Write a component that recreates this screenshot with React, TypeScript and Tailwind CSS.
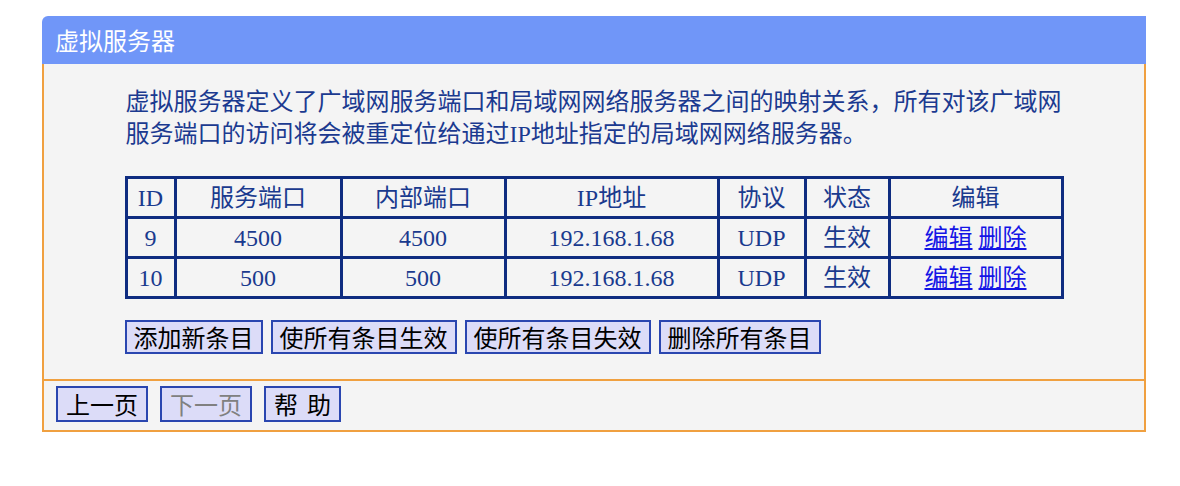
import React from "react";

const rows = [
  { id: "9", ext: "4500", inner: "4500", ip: "192.168.1.68", proto: "UDP", state: "生效" },
  { id: "10", ext: "500", inner: "500", ip: "192.168.1.68", proto: "UDP", state: "生效" },
];

const serif = "font-['Liberation_Serif','Noto_Sans_CJK_SC',serif]";
const sans = "font-['Noto_Sans_CJK_SC','Noto_Sans',sans-serif]";

function Btn({ children, muted, tall }: { children: React.ReactNode; muted?: boolean; tall?: boolean }) {
  return (
    <button
      className={`${tall ? "h-[36px] px-[8px]" : "h-[34px] px-[7px]"} border-2 border-[#2a46b0] bg-[#dcdcf8] text-[24px] leading-[30px] ${
        muted ? "text-[#808080]" : "text-black"
      }`}
    >
      {children}
    </button>
  );
}

export default function App() {
  const cell = "border-[3px] border-[#0e2c80] h-[40px] p-0 text-center align-middle";

  return (
    <div className={`bg-white min-h-screen pt-[16px] ${sans}`}>
      <div className="ml-[42px] w-[1104px]">
        <div className="h-[48px] bg-[#7096f8] rounded-tl-[6px] pl-[13px] flex items-center text-white text-[24px]">
          虚拟服务器
        </div>

        <div className="bg-[#f4f4f4] border-x-2 border-[#f0a040]">
          <div className="pt-[22px] pb-[25px] flex flex-col items-center">
            <div className="w-[939px]">
              <p className={`text-[24px] leading-[32px] text-[#1b3a90] pl-[1px] ${serif}`}>
                虚拟服务器定义了广域网服务端口和局域网网络服务器之间的映射关系，所有对该广域网服务端口的访问将会被重定位给通过IP地址指定的局域网网络服务器。
              </p>

              <table className={`mt-[26px] w-[936px] table-fixed border-collapse text-[24px] text-[#1a3a8e] ${serif}`}>
                <colgroup>
                  <col className="w-[49px]" />
                  <col className="w-[166px]" />
                  <col className="w-[164px]" />
                  <col className="w-[213px]" />
                  <col className="w-[87px]" />
                  <col className="w-[84px]" />
                  <col className="w-[173px]" />
                </colgroup>
                <thead>
                  <tr>
                    <th className={`${cell} font-normal`}>ID</th>
                    <th className={`${cell} font-normal`}>服务端口</th>
                    <th className={`${cell} font-normal`}>内部端口</th>
                    <th className={`${cell} font-normal`}>IP地址</th>
                    <th className={`${cell} font-normal`}>协议</th>
                    <th className={`${cell} font-normal`}>状态</th>
                    <th className={`${cell} font-normal`}>编辑</th>
                  </tr>
                </thead>
                <tbody>
                  {rows.map((r) => (
                    <tr key={r.id}>
                      <td className={cell}>{r.id}</td>
                      <td className={cell}>{r.ext}</td>
                      <td className={cell}>{r.inner}</td>
                      <td className={cell}>{r.ip}</td>
                      <td className={cell}>{r.proto}</td>
                      <td className={cell}>{r.state}</td>
                      <td className={cell}>
                        <a href="#" className="text-[#1414e6] underline">编辑</a>{" "}
                        <a href="#" className="text-[#1414e6] underline">删除</a>
                      </td>
                    </tr>
                  ))}
                </tbody>
              </table>

              <div className="mt-[21px] flex gap-[8px]">
                <Btn>添加新条目</Btn>
                <Btn>使所有条目生效</Btn>
                <Btn>使所有条目失效</Btn>
                <Btn>删除所有条目</Btn>
              </div>
            </div>
          </div>

          <div className="border-t-2 border-b-2 border-[#f0a040] pl-[12px] pt-[5px] pb-[8px] flex gap-[12px]">
            <Btn tall>上一页</Btn>
            <Btn tall muted>下一页</Btn>
            <Btn tall>
              帮<span className="ml-[9px]">助</span>
            </Btn>
          </div>
        </div>
      </div>
    </div>
  );
}
